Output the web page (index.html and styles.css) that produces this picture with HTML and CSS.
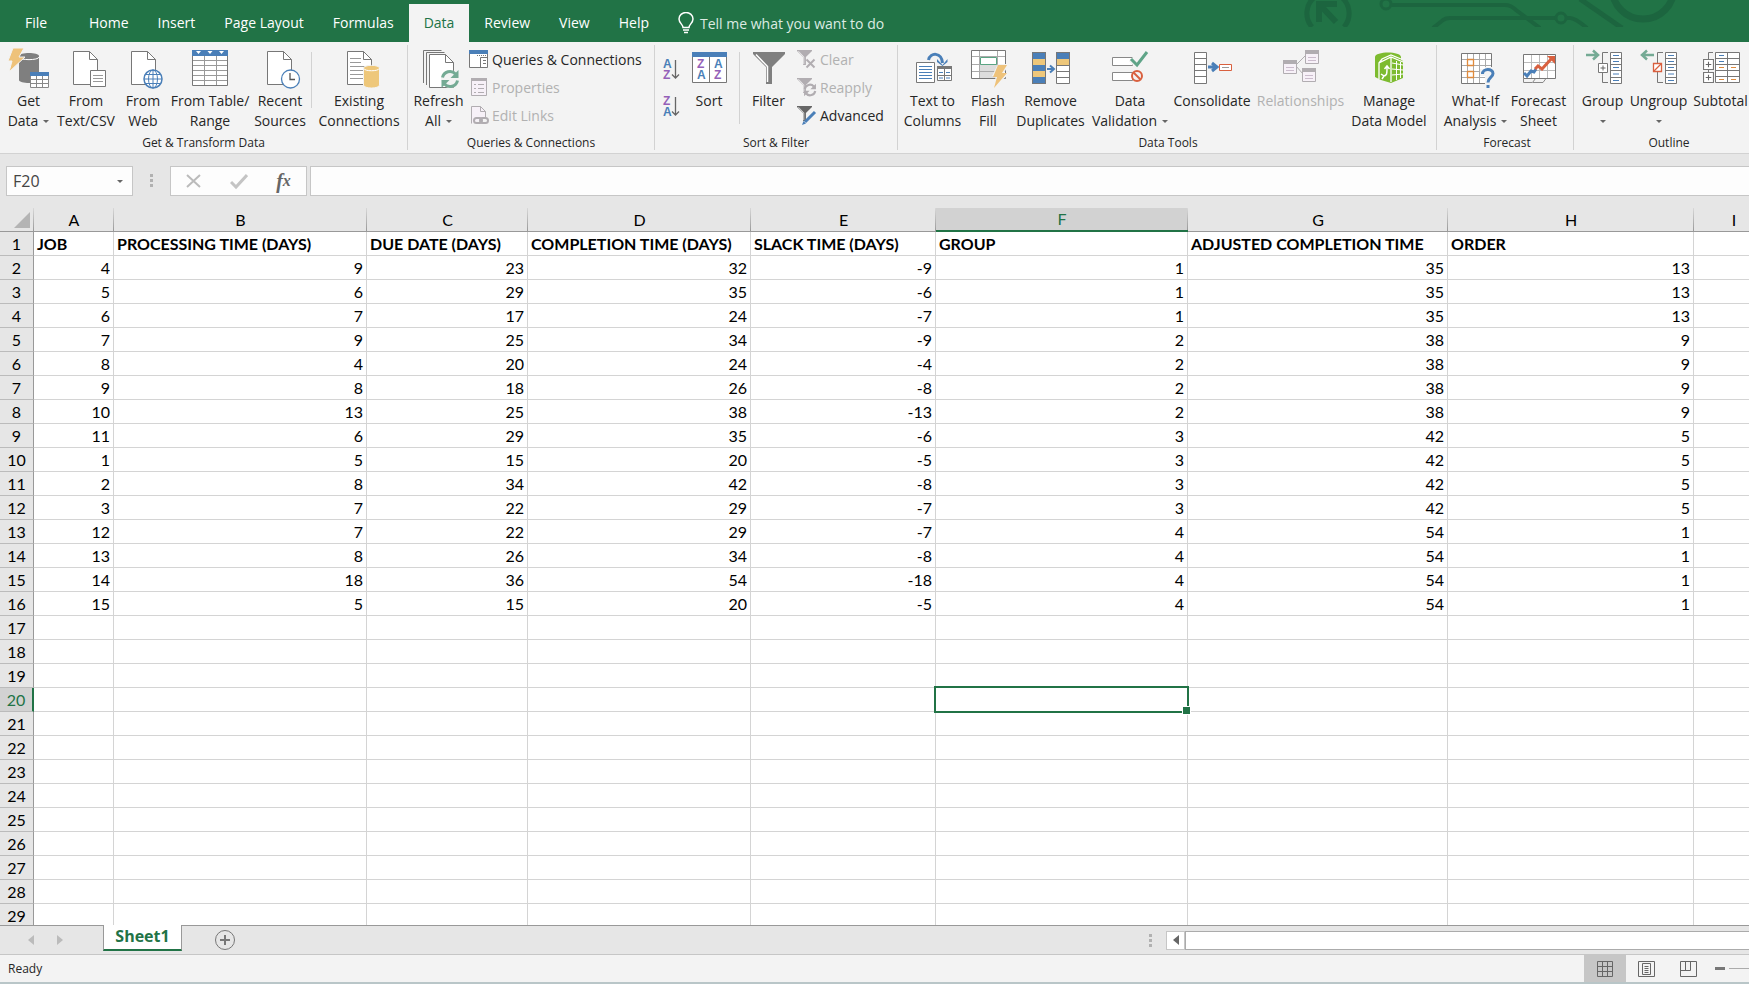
FILE: index.html
```
<!DOCTYPE html>
<html lang="en">
<head>
  <meta charset="UTF-8">
  <meta name="viewport" content="width=device-width, initial-scale=1.0">
  <title>Sheet1</title>
  <link rel="stylesheet" href="styles.css">
</head>
<body>
  <!-- shared icon parts -->
  <svg class="defs" aria-hidden="true">
    <symbol id="page" viewBox="0 0 40 40">
      <path d="M.5 .5h16l8 8v25h-24z" fill="#fff" stroke="#777"/>
      <path d="M16.5 .5v8h8" fill="none" stroke="#777"/>
    </symbol>
    <symbol id="bolt" viewBox="0 0 14 24">
      <path d="M5 0h9L9 8h5L1 23l3-11H0z" fill="#eec27a"/>
    </symbol>
    <symbol id="cycle" viewBox="0 0 20 20">
      <path d="M2.500 8.500A7.500 7.500 0 0 1 15.500 5M17.500 11.500A7.500 7.500 0 0 1 4.500 15" fill="none" stroke="currentColor" stroke-width="3"/>
      <path d="M18.500 1v8h-8zM1.500 19v-8h8z" fill="currentColor"/>
    </symbol>
    <symbol id="funnel" viewBox="0 0 32 32">
      <path d="M0 0h32v2L19 15v17h-6V15L0 2z" fill="currentColor"/>
      <path d="M3 2.500l11.500 12V30" fill="none" stroke="#fff" stroke-width="1.500"/>
    </symbol>
    <symbol id="column" viewBox="0 0 14 32">
      <path d="M.5 .5h12v31H.5zM.5 6.500h12M.5 12.500h12M.5 18.500h12M.5 24.500h12" fill="#fff" stroke="#777"/>
    </symbol>
    <symbol id="outline-column" viewBox="0 0 14 32">
      <path d="M.5 .5h11v31H.5zM.5 6.500h11M.5 12.500h11M.5 18.500h11M.5 25.500h11" fill="#fff" stroke="#777"/>
      <path d="M3 3.500h6M3 9.500h6M3 15.500h6M3 22h6M3 28.500h6" stroke="#4a7fb8"/>
    </symbol>
    <symbol id="relation" viewBox="0 0 15 15">
      <path d="M.5 .5h13v13H.5z" fill="#f7f1f8" stroke="#b1adb1"/>
      <path d="M0 0h14v4H0z" fill="#b1adb1"/>
      <path d="M3 7.500h8M3 10.500h8" stroke="#cbbccd"/>
    </symbol>
    <symbol id="plus-box" viewBox="0 0 10 10">
      <path d="M.5 .5h9v9h-9z" fill="#fff" stroke="#777"/>
      <path d="M5 2.500v5M2.500 5h5" stroke="#666"/>
    </symbol>
  </svg>

  <header class="tab-bar">
    <svg class="circuit" width="449" height="27" viewBox="0 0 449 27" fill="none" stroke="#1c653f" stroke-width="5" aria-hidden="true">
      <path d="M12 27A21 21 0 0 1 16 -4M44 27A21 21 0 0 0 40 -4"/>
      <path d="M19 22V4h18M20 5l16 17" stroke-width="6"/>
      <circle cx="86" cy="4" r="5" stroke-width="3"/>
      <path d="M91 5h114q6 0 11 5l24 18" stroke-width="4"/>
      <path d="M133 28l10-8q3-2 7-2h106" stroke-width="4"/>
      <circle cx="261" cy="18" r="5" stroke-width="3"/>
      <path d="M266 18h4q5 0 17 10" stroke-width="4"/>
      <path d="M280 -1l42 29"/>
      <circle cx="343" cy="-12" r="31" stroke-width="7"/>
    </svg>
    <nav class="tabs">
      <a class="tab file" href="#">File</a>
      <a class="tab" href="#">Home</a>
      <a class="tab" href="#">Insert</a>
      <a class="tab" href="#">Page Layout</a>
      <a class="tab" href="#">Formulas</a>
      <a class="tab active" href="#">Data</a>
      <a class="tab" href="#">Review</a>
      <a class="tab" href="#">View</a>
      <a class="tab" href="#">Help</a>
    </nav>
    <button class="tell-me" type="button">
      <svg width="16" height="22" viewBox="0 0 16 22" fill="none" stroke="#fff" stroke-width="1.500">
        <path d="M5 15.500c0-3-4-4.500-4-8.500a7 6.500 0 0 1 14 0c0 4-4 5.500-4 8.500zM5 18h6M6 20.500h4"/>
      </svg>
      Tell me what you want to do
    </button>
  </header>

  <section class="ribbon">
    <div class="group get-transform">
      <div class="tools">
        <button class="tool get-data" type="button">
          <svg class="icon" viewBox="0 0 40 40">
            <path d="M10 8c0-4 20-4 20 0v24c0 4-20 4-20 0z" fill="#7f7f7f"/>
            <path d="M10 9c0 3.500 20 3.500 20 0" fill="none" stroke="#fff"/>
            <path d="M4 0h11l-5 9h6L0 24l3-11H-1z" fill="#eec27a" stroke="#f3f3f3"/>
            <path d="M21 24h19v16H21z" fill="#fff"/>
            <path d="M21.500 24.500h18v15h-18zM21.500 31.500h18M21.500 35.500h18M27.500 28v12M33.500 28v12" fill="none" stroke="#888"/>
            <path d="M21 24h19v4H21z" fill="#4a7fb8"/>
          </svg>
          <span>Get</span><span class="caret">Data</span>
        </button>
        <button class="tool text-csv" type="button">
          <svg class="icon" viewBox="0 0 40 40">
            <use href="#page" x="7" y="3" width="40" height="40"/>
            <path d="M24.500 22.500h15v16h-15z" fill="#fff" stroke="#777"/>
            <path d="M27 27.500h10M27 30.500h10M27 33.500h10" stroke="#999"/>
          </svg>
          <span>From</span><span>Text/CSV</span>
        </button>
        <button class="tool web" type="button">
          <svg class="icon" viewBox="0 0 40 40">
            <use href="#page" x="8" y="3" width="40" height="40"/>
            <g fill="none" stroke="#4a7fb8">
              <circle cx="30" cy="31" r="9" fill="#fff" stroke-width="1.500"/>
              <ellipse cx="30" cy="31" rx="4.500" ry="9"/>
              <path d="M21 31h18M30 22v18M23 26.500h14M23 35.500h14"/>
            </g>
          </svg>
          <span>From</span><span>Web</span>
        </button>
        <button class="tool table" type="button">
          <svg class="icon" viewBox="0 0 40 40">
            <path d="M2.500 2.500h35v35h-35z" fill="#fff" stroke="#777"/>
            <path d="M3 12.500h34M3 17.500h34M3 22.500h34M3 27.500h34M3 32.500h34M14.500 8v29M26.500 8v29" stroke="#999"/>
            <path d="M2 2h36v6H2z" fill="#4a7fb8"/>
            <path d="M6 3h5l-2.500 3zM17.500 3h5L20 6zM29 3h5l-2.500 3z" fill="#fff"/>
          </svg>
          <span>From Table/</span><span>Range</span>
        </button>
        <button class="tool recent" type="button">
          <svg class="icon" viewBox="0 0 40 40">
            <use href="#page" x="7" y="3" width="40" height="40"/>
            <circle cx="30.500" cy="31" r="9" fill="#fff" stroke="#4a7fb8" stroke-width="1.300"/>
            <path d="M30 25v6.500h5" fill="none" stroke="#555" stroke-width="1.300"/>
          </svg>
          <span>Recent</span><span>Sources</span>
        </button>
        <i class="divider short"></i>
        <button class="tool existing" type="button">
          <svg class="icon" viewBox="0 0 40 40">
            <use href="#page" x="8" y="3" width="40" height="40"/>
            <path d="M11 10.500h11M11 14.500h11M11 18.500h15M11 22.500h13M11 26.500h13M11 30.500h13" stroke="#999"/>
            <path d="M24.500 20c0-3.500 16-3.500 16 0v17c0 4-16 4-16 0z" fill="#eec77a" stroke="#f3f3f3"/>
            <path d="M25 20.500c0 3 15 3 15 0" fill="none" stroke="#fff"/>
          </svg>
          <span>Existing</span><span>Connections</span>
        </button>
      </div>
      <div class="group-name">Get &amp; Transform Data</div>
    </div>

    <div class="group queries">
      <div class="tools">
        <button class="tool refresh" type="button">
          <svg class="icon" viewBox="0 0 40 40">
            <path d="M4.500 35V2.500h18M7.500 37V4.500h18" fill="none" stroke="#777"/>
            <use href="#page" x="10" y="6" width="40" height="40"/>
            <circle cx="31" cy="31" r="9" fill="#f3f3f3"/>
            <use href="#cycle" x="21" y="21" width="20" height="20" color="#74aa94"/>
          </svg>
          <span>Refresh</span><span class="caret">All</span>
        </button>
        <div class="stack">
          <button class="row-tool" type="button">
            <svg width="20" height="20" viewBox="0 0 20 20">
              <path d="M.5 1.500h18v17H.5z" fill="#fff" stroke="#777"/>
              <path d="M0 1h19v4H0z" fill="#4a7fb8"/>
              <path d="M11.500 8.500h7M11.500 8.500v10M14 11.500h3M14 14.500h3" stroke="#777" fill="none"/>
              <path d="M8 6.500h9" stroke="#777" stroke-dasharray="1 1"/>
            </svg>
            Queries &amp; Connections
          </button>
          <button class="row-tool" type="button" disabled>
            <svg width="20" height="20" viewBox="0 0 20 20">
              <path d="M2.500 1.500h15v17h-15z" fill="#f7f1f8" stroke="#b1adb1"/>
              <path d="M2 1h16v3H2z" fill="#b1adb1"/>
              <path d="M9 7.500h6M9 11.500h6M9 15.500h6M5 7.500h2M5 11.500h2M5 15.500h2" stroke="#b1adb1"/>
            </svg>
            Properties
          </button>
          <button class="row-tool" type="button" disabled>
            <svg width="20" height="20" viewBox="0 0 20 20">
              <path d="M2.500 18.500v-17h9l5 5v6" fill="#f7f1f8" stroke="#b1adb1"/>
              <path d="M11.500 1.500v5h5" fill="none" stroke="#b1adb1"/>
              <g fill="none" stroke="#b1adb1" stroke-width="2"><rect x="5" y="13" width="8" height="5" rx="2.500"/><rect x="11" y="13" width="8" height="5" rx="2.500"/></g>
            </svg>
            Edit Links
          </button>
        </div>
      </div>
      <div class="group-name">Queries &amp; Connections</div>
    </div>

    <div class="group sort-filter">
      <div class="tools">
        <div class="sort-pair">
          <button type="button" aria-label="Sort A to Z">
            <svg width="20" height="22" viewBox="0 0 20 22">
              <text class="az a" x="1" y="9">A</text><text class="az z" x="1" y="20">Z</text>
              <path d="M13.500 1v18M10 15.500l3.500 3.500 3.500-3.500" fill="none" stroke="#666" stroke-width="1.300"/>
            </svg>
          </button>
          <button type="button" aria-label="Sort Z to A">
            <svg width="20" height="22" viewBox="0 0 20 22">
              <text class="az z" x="1" y="9">Z</text><text class="az a" x="1" y="20">A</text>
              <path d="M13.500 1v18M10 15.500l3.500 3.500 3.500-3.500" fill="none" stroke="#666" stroke-width="1.300"/>
            </svg>
          </button>
        </div>
        <button class="tool sort" type="button">
          <svg class="icon" viewBox="0 0 40 40">
            <path d="M3.500 4.500h34v30h-34zM20.500 8v26" fill="#fff" stroke="#777"/>
            <path d="M3 4h35v5H3z" fill="#4a7fb8"/>
            <text class="az z" x="8" y="20">Z</text><text class="az a" x="8" y="31">A</text>
            <text class="az a" x="25" y="20">A</text><text class="az z" x="25" y="31">Z</text>
          </svg>
          <span>Sort</span>
        </button>
        <i class="divider"></i>
        <button class="tool filter" type="button">
          <svg class="icon" viewBox="0 0 40 40"><use href="#funnel" x="4" y="4" width="32" height="32" color="#7f7f7f"/></svg>
          <span>Filter</span>
        </button>
        <div class="stack">
          <button class="row-tool" type="button" disabled>
            <svg width="20" height="20" viewBox="0 0 20 20">
              <use href="#funnel" x="0" y="1" width="15" height="15" color="#b1adb1"/>
              <path d="M9.500 10.500l8 8M17.500 10.500l-8 8" stroke="#b1adb1" stroke-width="2"/>
            </svg>
            Clear
          </button>
          <button class="row-tool" type="button" disabled>
            <svg width="20" height="20" viewBox="0 0 20 20">
              <use href="#funnel" x="0" y="1" width="15" height="15" color="#b1adb1"/>
              <use href="#cycle" x="6" y="6" width="14" height="14" color="#b1adb1"/>
            </svg>
            Reapply
          </button>
          <button class="row-tool" type="button">
            <svg width="20" height="20" viewBox="0 0 20 20">
              <use href="#funnel" x="0" y="1" width="15" height="15" color="#666"/>
              <path d="M18 7L8 17" stroke="#4a7fb8" stroke-width="3"/>
              <path d="M5 20l1.500-4 2.500 2.500z" fill="#4a7fb8"/>
            </svg>
            Advanced
          </button>
        </div>
      </div>
      <div class="group-name">Sort &amp; Filter</div>
    </div>

    <div class="group data-tools">
      <div class="tools">
        <button class="tool text-columns" type="button">
          <svg class="icon" viewBox="0 0 40 40">
            <path d="M3.500 14.500h18v20h-18zM24.500 18.500h14v14h-14zM31.500 20v12M24.500 27.500h14" fill="#fff" stroke="#777"/>
            <path d="M24 18h15v3H24z" fill="#777"/>
            <path d="M6 18.500h13M6 21.500h13M6 24.500h13M6 27.500h13M6 30.500h13M26 24.500h4M33 24.500h4M26 30h4M33 30h4" stroke="#4a7fb8"/>
            <path d="M15.500 12c2-8 13-8 14 3" fill="none" stroke="#4a7fb8" stroke-width="3"/>
            <path d="M24 11l5.500 6 5-6v3l-5 4-5.500-4z" fill="#4a7fb8"/>
          </svg>
          <span>Text to</span><span>Columns</span>
        </button>
        <button class="tool flash" type="button">
          <svg class="icon" viewBox="0 0 40 40">
            <path d="M3.500 2.500h34v28h-34z" fill="#fff" stroke="#777"/>
            <path d="M12 17h17v13H12z" fill="#ddd"/>
            <path d="M4 8.500h33M4 16.500h33M4 23.500h33M11.500 3v27M29.500 3v27" stroke="#aaa"/>
            <path d="M12.500 9.500h16v7h-16z" fill="#fff" stroke="#5aa583"/>
            <path d="M30 16h11l-5 9h6L24 42l4-14h-4z" fill="#f3f3f3"/>
            <use href="#bolt" x="25" y="17" width="14" height="24"/>
          </svg>
          <span>Flash</span><span>Fill</span>
        </button>
        <button class="tool duplicates" type="button">
          <svg class="icon" viewBox="0 0 40 40">
            <path d="M1 4h14v32H1z" fill="#4a7fb8"/>
            <path d="M1 11h14v6H1zM1 23h14v6H1z" fill="#eec77a"/>
            <path d="M1.500 4.500h13v31h-13z" fill="none" stroke="#777"/>
            <path d="M25.500 4.500h13v31h-13z" fill="#fff"/>
            <path d="M25 4h14v7H25z" fill="#4a7fb8"/>
            <path d="M25 11h14v6H25z" fill="#eec77a"/>
            <path d="M25.500 4.500h13v31h-13zM26 17.500h12M26 23.500h12M26 29.500h12" fill="none" stroke="#777"/>
            <path d="M16 21h6M19 17.500l4 3.500-4 3.500" fill="none" stroke="#4a7fb8" stroke-width="2"/>
          </svg>
          <span>Remove</span><span>Duplicates</span>
        </button>
        <button class="tool validation" type="button">
          <svg class="icon" viewBox="0 0 40 40">
            <path d="M2.500 9.500h20v8h-20zM2.500 24.500h20v8h-20z" fill="#fff" stroke="#888"/>
            <path d="M21 11l6 6L37 4" fill="none" stroke="#f3f3f3" stroke-width="6"/>
            <path d="M21 11l6 6L37 4" fill="none" stroke="#5fa488" stroke-width="3"/>
            <circle cx="27" cy="28" r="5" fill="#f3f3f3" stroke="#d9603f" stroke-width="2"/>
            <path d="M23.500 24.500l7 7" stroke="#d9603f" stroke-width="2"/>
          </svg>
          <span>Data</span><span class="caret">Validation</span>
        </button>
        <button class="tool consolidate" type="button">
          <svg class="icon" viewBox="0 0 40 40">
            <use href="#column" x="2" y="4" width="14" height="32"/>
            <path d="M16 19h8M20 15l5 4-5 4" fill="none" stroke="#4a7fb8" stroke-width="3"/>
            <path d="M27.500 16.500h12v6h-12z" fill="#fff" stroke="#d9603f"/>
            <path d="M30 19.500h7" stroke="#999"/>
          </svg>
          <span>Consolidate</span>
        </button>
        <button class="tool relationships" type="button" disabled>
          <svg class="icon" viewBox="0 0 40 40">
            <path d="M15 17l10-10M15 18l7 8" stroke="#b1adb1"/>
            <use href="#relation" x="2" y="12" width="15" height="15"/>
            <use href="#relation" x="24" y="2" width="15" height="15"/>
            <use href="#relation" x="21" y="20" width="15" height="15"/>
          </svg>
          <span>Relationships</span>
        </button>
        <button class="tool model" type="button">
          <svg class="icon" viewBox="0 0 40 40">
            <path d="M6 9c0-6 26-6 26 0v3l2 1v17l-12 5-10-3-6-3z" fill="#7dbb2f"/>
            <path d="M10 31V15l12-6 12 5M22 9v25M10 15l3-4 9-4 10 4" fill="none" stroke="#fff" stroke-width="1.300"/>
            <path d="M23 15l11 2M23 21l11 1M23 27l11-1M27.500 13v19M31.500 14v16" stroke="#fff"/>
            <path d="M14 28c4 0 4-2 4-9M12 26l3 2-2 3M15.500 21l2.500-3 2.500 3" fill="none" stroke="#fff" stroke-width="1.500"/>
          </svg>
          <span>Manage</span><span>Data Model</span>
        </button>
      </div>
      <div class="group-name">Data Tools</div>
    </div>

    <div class="group forecast">
      <div class="tools">
        <button class="tool what-if" type="button">
          <svg class="icon" viewBox="0 0 40 40">
            <path d="M5.500 5.500h30v30h-30z" fill="#fff" stroke="#777"/>
            <path d="M6 11.500h29M6 17.500h29M6 23.500h29M6 29.500h29M11.500 6v29M17.500 6v29M23.500 6v29M29.500 6v29" stroke="#aaa"/>
            <path d="M11.500 11.500h6v6h-6zM11.500 23.500h6v6h-6z" fill="#fff" stroke="#df8a3c" stroke-width="1.300"/>
            <path d="M24 21h5v-2h10v21H29V28h-5z" fill="#f3f3f3"/>
            <path d="M26.500 26c0-6 10.500-6 10.500-.5 0 4-5 4-5 9" fill="none" stroke="#4a7fb8" stroke-width="3"/>
            <path d="M30.500 37h3v3h-3z" fill="#4a7fb8"/>
          </svg>
          <span>What-If</span><span class="caret">Analysis</span>
        </button>
        <button class="tool forecast-sheet" type="button">
          <svg class="icon" viewBox="0 0 40 40">
            <path d="M4.500 6.500h32v24h-32z" fill="#fff" stroke="#777"/>
            <path d="M5 14.500h31M5 22.500h31M12.500 7v23M20.500 7v23M28.500 7v23" stroke="#bbb"/>
            <path d="M4.500 30.500v4h9l3-4M14 34.500h10l3-4" fill="none" stroke="#888"/>
            <path d="M5 25l3 3 4-5 3 1 2-3" fill="none" stroke="#4a7fb8" stroke-width="3"/>
            <path d="M16 21l3-3 4 3 10-11" fill="none" stroke="#d9603f" stroke-width="3"/>
            <path d="M28 8h8v8z" fill="#d9603f"/>
          </svg>
          <span>Forecast</span><span>Sheet</span>
        </button>
      </div>
      <div class="group-name">Forecast</div>
    </div>

    <div class="group outline">
      <div class="tools">
        <button class="tool group-rows" type="button">
          <svg class="icon" viewBox="0 0 40 40">
            <path d="M3 7h11M10 2.500l5 4.500-5 4.500" fill="none" stroke="#74aa94" stroke-width="2.500"/>
            <path d="M25 4.500h-5.500v30H25" fill="none" stroke="#777"/>
            <use href="#plus-box" x="15" y="15" width="10" height="10"/>
            <use href="#outline-column" x="27" y="4" width="14" height="32"/>
          </svg>
          <span>Group</span><span class="caret"></span>
        </button>
        <button class="tool ungroup" type="button">
          <svg class="icon" viewBox="0 0 40 40">
            <path d="M15 7H4M8 2.500L3 7l5 4.500" fill="none" stroke="#74aa94" stroke-width="2.500"/>
            <path d="M24 4.500h-5.500v30H24" fill="none" stroke="#777"/>
            <path d="M14.500 15.500h8v8h-8z" fill="#fff" stroke="#d9603f" stroke-width="1.300"/>
            <path d="M15 23l7-7" stroke="#d9603f" stroke-width="1.300"/>
            <use href="#outline-column" x="26" y="4" width="14" height="32"/>
          </svg>
          <span>Ungroup</span><span class="caret"></span>
        </button>
        <button class="tool subtotal" type="button">
          <svg class="icon" viewBox="0 0 40 40">
            <path d="M12 4.500H7.500v30H12" fill="none" stroke="#777"/>
            <use href="#plus-box" x="2" y="11" width="11" height="11"/>
            <use href="#plus-box" x="2" y="24" width="11" height="11"/>
            <path d="M14.500 4.500h24v30h-24zM26.500 4.500v30M14.500 10.500h24M14.500 16.500h24M14.500 22.500h24M14.500 28.500h24" fill="#fff" stroke="#777"/>
            <path d="M18 7.500h5M18 13.500h5" stroke="#4a7fb8"/>
            <path d="M18 19.500h5M30 19.500h5M18 31.500h5M30 31.500h5" stroke="#df8a3c"/>
          </svg>
          <span>Subtotal</span>
        </button>
      </div>
      <div class="group-name">Outline</div>
    </div>
  </section>

  <section class="formula-bar">
    <div class="name-box">
      <input type="text" value="F20" aria-label="Name box">
      <button class="arrow-down" type="button" aria-label="Show names"></button>
    </div>
    <i class="grip"></i>
    <div class="formula-buttons">
      <button type="button" aria-label="Cancel">
        <svg width="18" height="18" viewBox="0 0 18 18" fill="none" stroke="#bbb" stroke-width="2"><path d="M2 3l13 12M15 3L2 15"/></svg>
      </button>
      <button type="button" aria-label="Enter">
        <svg width="18" height="18" viewBox="0 0 18 18" fill="none" stroke="#c4c4c4" stroke-width="3"><path d="M1 10l5 5L17 3"/></svg>
      </button>
      <button class="fx" type="button" aria-label="Insert function">f<small>x</small></button>
    </div>
    <input class="formula" type="text" aria-label="Formula">
  </section>

  <main class="sheet">
    <table>
      <colgroup>
        <col class="col-head"><col class="col-a"><col class="col-b"><col class="col-c"><col class="col-d"><col class="col-e"><col class="col-f"><col class="col-g"><col class="col-h"><col class="col-i">
      </colgroup>
      <thead>
        <tr><th class="corner"></th><th>A</th><th>B</th><th>C</th><th>D</th><th>E</th><th class="current">F</th><th>G</th><th>H</th><th>I</th></tr>
      </thead>
      <tbody>
        <tr class="titles"><th>1</th><td>JOB</td><td>PROCESSING TIME (DAYS)</td><td>DUE DATE (DAYS)</td><td>COMPLETION TIME (DAYS)</td><td>SLACK TIME (DAYS)</td><td>GROUP</td><td>ADJUSTED COMPLETION TIME</td><td>ORDER</td><td></td></tr>
        <tr><th>2</th><td>4</td><td>9</td><td>23</td><td>32</td><td>-9</td><td>1</td><td>35</td><td>13</td><td></td></tr>
        <tr><th>3</th><td>5</td><td>6</td><td>29</td><td>35</td><td>-6</td><td>1</td><td>35</td><td>13</td><td></td></tr>
        <tr><th>4</th><td>6</td><td>7</td><td>17</td><td>24</td><td>-7</td><td>1</td><td>35</td><td>13</td><td></td></tr>
        <tr><th>5</th><td>7</td><td>9</td><td>25</td><td>34</td><td>-9</td><td>2</td><td>38</td><td>9</td><td></td></tr>
        <tr><th>6</th><td>8</td><td>4</td><td>20</td><td>24</td><td>-4</td><td>2</td><td>38</td><td>9</td><td></td></tr>
        <tr><th>7</th><td>9</td><td>8</td><td>18</td><td>26</td><td>-8</td><td>2</td><td>38</td><td>9</td><td></td></tr>
        <tr><th>8</th><td>10</td><td>13</td><td>25</td><td>38</td><td>-13</td><td>2</td><td>38</td><td>9</td><td></td></tr>
        <tr><th>9</th><td>11</td><td>6</td><td>29</td><td>35</td><td>-6</td><td>3</td><td>42</td><td>5</td><td></td></tr>
        <tr><th>10</th><td>1</td><td>5</td><td>15</td><td>20</td><td>-5</td><td>3</td><td>42</td><td>5</td><td></td></tr>
        <tr><th>11</th><td>2</td><td>8</td><td>34</td><td>42</td><td>-8</td><td>3</td><td>42</td><td>5</td><td></td></tr>
        <tr><th>12</th><td>3</td><td>7</td><td>22</td><td>29</td><td>-7</td><td>3</td><td>42</td><td>5</td><td></td></tr>
        <tr><th>13</th><td>12</td><td>7</td><td>22</td><td>29</td><td>-7</td><td>4</td><td>54</td><td>1</td><td></td></tr>
        <tr><th>14</th><td>13</td><td>8</td><td>26</td><td>34</td><td>-8</td><td>4</td><td>54</td><td>1</td><td></td></tr>
        <tr><th>15</th><td>14</td><td>18</td><td>36</td><td>54</td><td>-18</td><td>4</td><td>54</td><td>1</td><td></td></tr>
        <tr><th>16</th><td>15</td><td>5</td><td>15</td><td>20</td><td>-5</td><td>4</td><td>54</td><td>1</td><td></td></tr>
        <tr><th>17</th><td></td><td></td><td></td><td></td><td></td><td></td><td></td><td></td><td></td></tr>
        <tr><th>18</th><td></td><td></td><td></td><td></td><td></td><td></td><td></td><td></td><td></td></tr>
        <tr><th>19</th><td></td><td></td><td></td><td></td><td></td><td></td><td></td><td></td><td></td></tr>
        <tr><th class="current">20</th><td></td><td></td><td></td><td></td><td></td><td class="selected"></td><td></td><td></td><td></td></tr>
        <tr><th>21</th><td></td><td></td><td></td><td></td><td></td><td></td><td></td><td></td><td></td></tr>
        <tr><th>22</th><td></td><td></td><td></td><td></td><td></td><td></td><td></td><td></td><td></td></tr>
        <tr><th>23</th><td></td><td></td><td></td><td></td><td></td><td></td><td></td><td></td><td></td></tr>
        <tr><th>24</th><td></td><td></td><td></td><td></td><td></td><td></td><td></td><td></td><td></td></tr>
        <tr><th>25</th><td></td><td></td><td></td><td></td><td></td><td></td><td></td><td></td><td></td></tr>
        <tr><th>26</th><td></td><td></td><td></td><td></td><td></td><td></td><td></td><td></td><td></td></tr>
        <tr><th>27</th><td></td><td></td><td></td><td></td><td></td><td></td><td></td><td></td><td></td></tr>
        <tr><th>28</th><td></td><td></td><td></td><td></td><td></td><td></td><td></td><td></td><td></td></tr>
        <tr><th>29</th><td></td><td></td><td></td><td></td><td></td><td></td><td></td><td></td><td></td></tr>
      </tbody>
    </table>
  </main>

  <section class="sheet-bar">
    <div class="sheet-nav">
      <button type="button" aria-label="Previous sheet"><svg width="6" height="10"><path d="M6 0v10L0 5z" fill="#bbb"/></svg></button>
      <button type="button" aria-label="Next sheet"><svg width="6" height="10"><path d="M0 0v10l6-5z" fill="#bbb"/></svg></button>
    </div>
    <a class="sheet-tab" href="#">Sheet1</a>
    <button class="add-sheet" type="button" aria-label="New sheet">
      <svg width="22" height="22" viewBox="0 0 22 22" fill="none" stroke="#777"><circle cx="11" cy="11" r="9.500"/><path d="M11 6v10M6 11h10" stroke-width="2"/></svg>
    </button>
    <div class="h-scroll">
      <i class="grip"></i>
      <button type="button" aria-label="Scroll left"><svg width="6" height="10"><path d="M6 0v10L0 5z" fill="#666"/></svg></button>
      <div class="scroll-thumb"></div>
    </div>
  </section>

  <footer class="status-bar">
    <span class="status">Ready</span>
    <button class="view on" type="button" aria-label="Normal view">
      <svg width="18" height="18" viewBox="0 0 18 18" fill="none" stroke="#666"><path d="M1.500 1.500h15v15h-15zM6.500 1.500v15M11.500 1.500v15M1.500 6.500h15M1.500 11.500h15"/></svg>
    </button>
    <button class="view" type="button" aria-label="Page layout view">
      <svg width="18" height="18" viewBox="0 0 18 18" fill="none" stroke="#666"><path d="M.5 1.500h16v15H.5zM4.500 3.500h8v11h-8zM6.500 6.500h4M6.500 8.500h4M6.500 10.500h4M6.500 12.500h4"/></svg>
    </button>
    <button class="view" type="button" aria-label="Page break view">
      <svg width="18" height="18" viewBox="0 0 18 18" fill="none" stroke="#666"><path d="M.5 1.500h16v15H.5zM.5 10.500h10v-9M5.500 1.500v9"/></svg>
    </button>
    <button class="zoom-out" type="button" aria-label="Zoom out"></button>
    <input class="zoom" type="range" value="50" aria-label="Zoom">
  </footer>
</body>
</html>
```
FILE: styles.css
```
* {
  box-sizing: border-box;
}

body {
  margin: 0;
  height: 100vh;
  display: flex;
  flex-direction: column;
  overflow: hidden;
  background: #e6e6e6;
  color: #262626;
  font-family: "Open Sans", "Noto Sans", sans-serif;
  font-size: 14px;
}

button {
  margin: 0;
  padding: 0;
  border: 0;
  background: none;
  color: inherit;
  font: inherit;
  white-space: nowrap;
}

button:disabled {
  color: #b1b1b1;
}

svg {
  display: block;
  flex: none;
}

.defs {
  position: absolute;
  width: 0;
  height: 0;
}

/* Tabs */

.tab-bar {
  position: relative;
  flex: none;
  display: flex;
  height: 42px;
  padding-top: 4px;
  background: #217346;
  color: #fff;
}

.circuit {
  position: absolute;
  top: 0;
  right: 0;
}

.tabs {
  display: flex;
  gap: 1px;
}

.tab {
  padding: 0 14px;
  color: #fff;
  line-height: 38px;
  text-decoration: none;
}

.tab.file {
  width: 74px;
  padding-left: 25px;
}

.tab.active {
  padding: 0 15px;
  background: #f3f3f3;
  color: #217346;
}

.tell-me {
  display: flex;
  align-items: center;
  gap: 6px;
  margin-left: 15px;
  color: #dcebe2;
}

/* Ribbon */

.ribbon {
  flex: none;
  display: flex;
  height: 112px;
  overflow: hidden;
  padding: 3px 0;
  border-bottom: 1px solid #d2d2d2;
  background: #f3f3f3;
}

.group {
  flex: none;
  display: flex;
  flex-direction: column;
  border-right: 1px solid #d2d2d2;
}

.get-transform { width: 408px; }
.queries { width: 247px; }
.sort-filter { width: 243px; }
.data-tools { width: 539px; padding-left: 2px; }
.forecast { width: 137px; padding-left: 4px; }
.outline { width: 187px; padding-left: 4px; }

.tools {
  flex: none;
  display: flex;
  height: 88px;
}

.group-name {
  font-size: 12px;
  line-height: 20px;
  text-align: center;
}

.tool {
  flex: none;
  display: flex;
  flex-direction: column;
  align-items: center;
  padding-top: 3px;
  line-height: 20px;
}

.icon {
  width: 40px;
  height: 40px;
  margin-bottom: 3px;
  overflow: visible;
}

.get-data { width: 57px; }
.text-csv { width: 58px; }
.web { width: 56px; }
.table { width: 78px; }
.recent { width: 62px; }
.existing { width: 94px; }
.refresh { width: 61px; }
.sort { width: 40px; }
.filter { width: 57px; }
.text-columns { width: 65px; }
.flash { width: 46px; }
.duplicates { width: 79px; }
.validation { width: 80px; }
.consolidate { width: 84px; }
.relationships { width: 93px; }
.model { width: 84px; }
.what-if { width: 69px; }
.forecast-sheet { width: 57px; }
.group-rows { width: 49px; }
.ungroup { width: 63px; }
.subtotal { width: 61px; }

.caret {
  display: flex;
  align-items: center;
  gap: 5px;
  min-height: 20px;
}

.caret::after,
.arrow-down::after {
  content: "";
  border: 3px solid transparent;
  border-top-color: #666;
  border-bottom: 0;
}

.divider {
  width: 1px;
  height: 72px;
  margin: 7px 0 0 10px;
  background: #d2d2d2;
}

.divider.short {
  height: 56px;
  margin-left: 0;
}

.row-tool {
  display: flex;
  align-items: center;
  gap: 3px;
  height: 28px;
}

.sort-pair {
  display: flex;
  flex-direction: column;
  align-items: center;
  gap: 15px;
  width: 34px;
  padding-top: 14px;
}

.az {
  font-family: "Liberation Sans", sans-serif;
  font-size: 12px;
  font-weight: bold;
}

.az.a { fill: #4a7fb8; }
.az.z { fill: #9460b8; }

/* Formula bar */

.formula-bar {
  flex: none;
  display: flex;
  height: 54px;
  padding: 12px 0 12px 6px;
}

.name-box,
.formula-buttons,
.formula {
  border: 1px solid #c6c6c6;
  background: #fdfdfd;
}

.name-box {
  display: flex;
  width: 127px;
}

.name-box input {
  width: 100px;
  padding: 0 6px;
  border: 0;
  background: none;
  color: #444;
  font: inherit;
  font-size: 16px;
}

.arrow-down {
  display: flex;
  flex: 1;
  align-items: center;
  justify-content: center;
}

.grip {
  width: 3px;
  height: 13px;
  background: repeating-linear-gradient(#b1b1b1 0 3px, transparent 3px 5px);
}

.formula-bar .grip {
  margin: 8px 17px;
}

.formula-buttons {
  display: flex;
  width: 137px;
  margin-right: 3px;
}

.formula-buttons button {
  display: flex;
  flex: 1;
  align-items: center;
  justify-content: center;
}

.formula-buttons .fx {
  color: #666;
  font: italic bold 20px/26px "Liberation Serif", serif;
}

.fx small {
  font-size: 16px;
}

.formula {
  flex: 1;
  border-right: 0;
}

/* Sheet */

.sheet {
  flex: 1;
  min-height: 0;
  overflow: hidden;
  background: #fff;
}

table {
  width: max-content;
  table-layout: fixed;
  border-collapse: separate;
  border-spacing: 0;
  color: #000;
  font-family: Lato, sans-serif;
  font-size: 16px;
  line-height: 23px;
}

.col-head { width: 34px; }
.col-a { width: 80px; }
.col-b { width: 253px; }
.col-c { width: 161px; }
.col-d { width: 223px; }
.col-e { width: 185px; }
.col-f { width: 252px; }
.col-g { width: 260px; }
.col-h { width: 246px; }
.col-i { width: 80px; }

th,
td {
  height: 24px;
  padding: 0 3px;
  overflow: hidden;
  white-space: nowrap;
}

th {
  padding: 0;
  background: #e6e6e6;
  font-weight: normal;
  text-align: center;
}

thead th {
  border-bottom: 1px solid #999;
  background: linear-gradient(#d8d8d8, #999) right / 1px 100% no-repeat #e6e6e6;
}

thead .current {
  border-bottom: 2px solid #217346;
  background-color: #d2d2d2;
  color: #217346;
  line-height: 22px;
}

.corner {
  position: relative;
}

.corner::after {
  content: "";
  position: absolute;
  right: 4px;
  bottom: 3px;
  border: 8px solid #b4b4b4;
  border-top-color: transparent;
  border-left-color: transparent;
}

tbody th {
  border-right: 1px solid #999;
  border-bottom: 1px solid #bbb;
}

tbody .current {
  border-right: 2px solid #217346;
  background: #d2d2d2;
  color: #217346;
}

td {
  border-right: 1px solid #d4d4d4;
  border-bottom: 1px solid #d4d4d4;
  text-align: right;
}

.titles td {
  font-weight: bold;
  text-align: left;
}

td.selected {
  position: relative;
  overflow: visible;
}

.selected::before {
  content: "";
  position: absolute;
  inset: -2px;
  border: 2px solid #217346;
}

.selected::after {
  content: "";
  position: absolute;
  right: -4px;
  bottom: -4px;
  width: 7px;
  height: 7px;
  border: 1px solid #fff;
  background: #217346;
}

/* Sheet tabs and scroll bar */

.sheet-bar {
  flex: none;
  display: flex;
  height: 30px;
  border-top: 1px solid #999;
  border-bottom: 1px solid #c6c6c6;
}

.sheet-nav {
  display: flex;
  gap: 23px;
  width: 103px;
  padding-left: 28px;
}

.sheet-tab {
  width: 79px;
  height: 26px;
  margin-top: -1px;
  border: 1px solid #999;
  border-top: 0;
  border-bottom: 2px solid #217346;
  background: #fff;
  color: #217346;
  font-size: 16px;
  font-weight: bold;
  line-height: 22px;
  text-align: center;
  text-decoration: none;
}

.add-sheet {
  margin-left: 32px;
}

.h-scroll {
  display: flex;
  align-items: center;
  width: 600px;
  margin-left: auto;
}

.h-scroll button {
  display: flex;
  align-items: center;
  justify-content: center;
  width: 19px;
  height: 19px;
  margin-left: 14px;
  border: 1px solid #c6c6c6;
  background: #fff;
}

.scroll-thumb {
  flex: 1;
  height: 19px;
  border: 1px solid #ababab;
  border-right: 0;
  background: #fff;
}

/* Status bar */

.status-bar {
  flex: none;
  display: flex;
  align-items: center;
  height: 29px;
  overflow: hidden;
  border-bottom: 2px solid #b9c6c8;
  background: #f3f3f3;
  font-size: 12px;
}

.status {
  margin-right: auto;
  padding-left: 8px;
}

.view {
  display: flex;
  align-items: center;
  justify-content: center;
  width: 42px;
  height: 27px;
}

.view.on {
  background: #c6c6c6;
}

.zoom-out {
  width: 10px;
  height: 3px;
  margin: 0 4px 0 5px;
  background: #777;
}

.zoom {
  appearance: none;
  width: 20px;
  height: 1px;
  margin: 0;
  background: #ababab;
}

.zoom::-webkit-slider-thumb {
  appearance: none;
  width: 0;
}
```
